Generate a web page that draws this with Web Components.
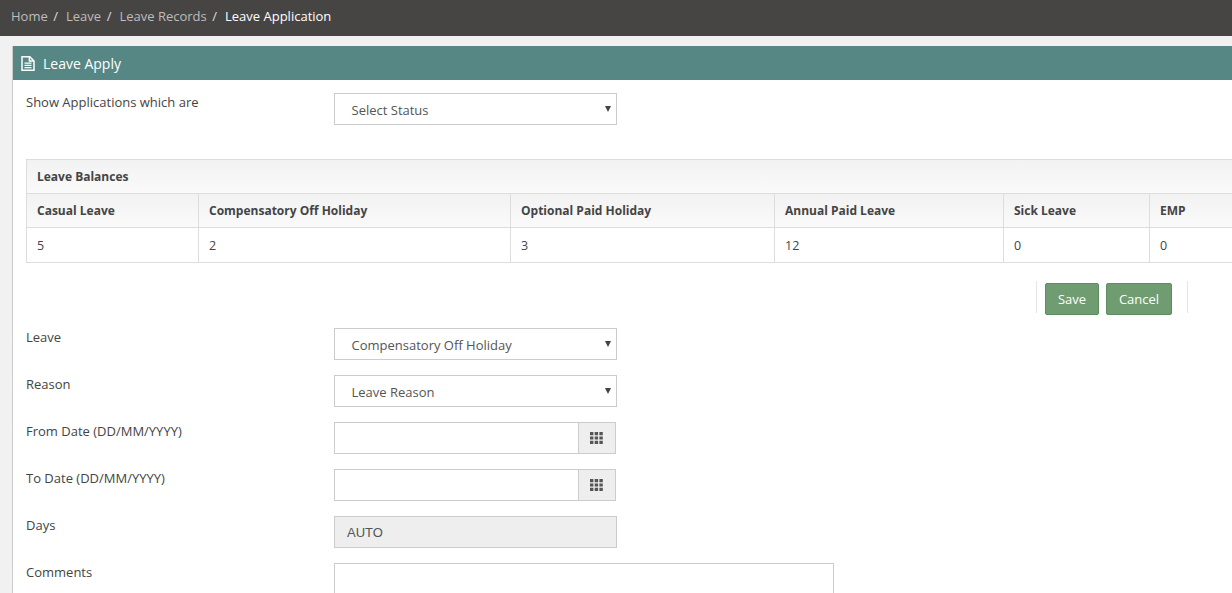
<!DOCTYPE html>
<html><head><meta charset="utf-8">
<style>
html,body{margin:0;padding:0;height:593px;overflow:hidden;background:#f1f1f1}
body{font-family:"Open Sans",sans-serif;font-size:12px}
</style></head><body>
<app-shell>
  <crumb-bar slot="top"></crumb-bar>
  <leave-panel>
    <form-row label="Show Applications which are" style="height:66px"><select-box>Select Status</select-box></form-row>
    <balance-table></balance-table>
    <action-bar></action-bar>
    <form-row label="Leave"><select-box>Compensatory Off Holiday</select-box></form-row>
    <form-row label="Reason"><select-box>Leave Reason</select-box></form-row>
    <form-row label="From Date (DD/MM/YYYY)"><date-box></date-box></form-row>
    <form-row label="To Date (DD/MM/YYYY)"><date-box></date-box></form-row>
    <form-row label="Days"><auto-box>AUTO</auto-box></form-row>
    <form-row label="Comments"><text-box></text-box></form-row>
  </leave-panel>
</app-shell>
<script>
function def(name, css, html, init){
  customElements.define(name, class extends HTMLElement{
    constructor(){super();const r=this.attachShadow({mode:"open"});r.innerHTML="<style>"+css+"</style>"+html;}
    connectedCallback(){ if(init) init(this); }
  });
}
def("app-shell",":host{display:block;width:1232px;height:593px;overflow:hidden}main{padding:10px 0 0 12px}",'<slot name="top"></slot><main><slot></slot></main>');
def("crumb-bar",`:host{display:flex;align-items:center;height:36px;background:#474543;padding-left:11px;color:#bdbdbd;font-size:13px;white-space:pre;padding-bottom:4px;box-sizing:border-box}
b{font-weight:400;color:#fff}i{font-style:normal;color:#ddd;margin:0 8px 0 5.5px}`,
`<span>Home</span><i>/</i><span>Leave</span><i>/</i><span>Leave Records</span><i>/</i><b>Leave Application</b>`);
def("leave-panel",`:host{display:block;width:1220px;box-sizing:border-box;border-left:1px solid #ccc;background:#fff;height:547px;overflow:hidden}
header{display:flex;align-items:center;gap:8px;height:34px;background:#568785;color:#fff;font-size:14px;padding-left:9px;margin-left:-1px}
svg{display:block}
section{padding:13px 0 0 13px}`,
`<header><svg width="14" height="15" viewBox="0 0 14 15" fill="none" stroke="#fff" stroke-width="1.5"><path d="M1 .8h7.8l4.2 4.2v9.2H1z"/><path d="M8.4 1v4h4.4"/><path d="M3.5 7.2h7M3.5 9.4h7M3.5 11.6h7" stroke-width="1.2"/></svg><span>Leave Apply</span></header><section><slot></slot></section>`);
def("form-row",`:host{display:flex;height:47px;color:#444;font-size:13px}
label{width:308px;flex:none;line-height:18px}`,
`<label></label><slot></slot>`,el=>{el.shadowRoot.querySelector("label").textContent=el.getAttribute("label")});
def("select-box",`:host{display:flex;align-items:center;box-sizing:border-box;width:283px;height:32px;border:1px solid #ccc;padding-left:16.5px;color:#555;font-size:13px;position:relative;padding-top:2px}
i{position:absolute;right:5px;top:12px;width:0;height:0;border:3.5px solid transparent;border-top:6px solid #444;border-bottom:0}`,`<slot></slot><i></i>`);
def("date-box",`:host{display:flex;box-sizing:border-box;width:282px;height:32px;border:1px solid #ccc}
div{flex:1}span{width:37px;flex:none;box-sizing:border-box;padding-right:1px;border-left:1px solid #ccc;background:#eee;display:flex;align-items:center;justify-content:center}`,
`<div></div><span><svg width="13" height="12" viewBox="0 0 13 12" fill="#555"><path d="M0 0h3.4v3.2H0zM4.7 0h3.4v3.2H4.7zM9.4 0h3.4v3.2H9.4zM0 4.4h3.4v3.2H0zM4.7 4.4h3.4v3.2H4.7zM9.4 4.4h3.4v3.2H9.4zM0 8.8h3.4V12H0zM4.7 8.8h3.4V12H4.7zM9.4 8.8h3.4V12H9.4z"/></svg></span>`);
def("auto-box",`:host{display:flex;align-items:center;box-sizing:border-box;width:283px;height:32px;border:1px solid #ccc;background:#eee;padding-left:12px;color:#555;font:13px "Liberation Sans",sans-serif}`,`<slot></slot>`);
def("text-box",`:host{display:block;box-sizing:border-box;width:500px;height:60px;border:1px solid #ccc;background:#fff}`,``);
def("balance-table",`:host{display:block;width:1300px;color:#444;font-size:12px}
.t{display:grid;grid-template-columns:171px 312px 264px 229px 146px 200px;border:solid #ddd;border-width:1px 0 1px 1px}
.c{box-sizing:border-box;height:34px;padding:0 10px;display:flex;align-items:center;border-left:1px solid #ddd;border-bottom:1px solid #ddd;font-weight:700;background:linear-gradient(#f2f2f2,#fafafa)}
.c.f{border-left:0}.c.h{grid-column:1/-1;border-left:0}
.v{background:#fff;font-weight:400;border-bottom:0;font-size:12.5px}`,
`<div class="t"><div class="c h">Leave Balances</div>
<div class="c f">Casual Leave</div><div class="c">Compensatory Off Holiday</div><div class="c">Optional Paid Holiday</div><div class="c">Annual Paid Leave</div><div class="c">Sick Leave</div><div class="c">EMP</div>
<div class="c v f">5</div><div class="c v">2</div><div class="c v">3</div><div class="c v">12</div><div class="c v">0</div><div class="c v">0</div></div>`);
def("action-bar",`:host{display:flex;height:65px;padding-top:18px;box-sizing:border-box;margin-left:1010px;width:152px}
div{display:flex;gap:7px;border:solid #e5e5e5;border-width:0 1px;padding:0 15px 0 8px;height:32px}
button{font:13px "Open Sans",sans-serif;color:#fff;background:#6f9c71;border:1px solid #5f8c61;border-radius:2px;height:32px;padding:0;box-sizing:border-box;margin-top:2px}
.s{width:54px}.k{width:66px}`,`<div><button class="s">Save</button><button class="k">Cancel</button></div>`);
</script>
</body></html>
